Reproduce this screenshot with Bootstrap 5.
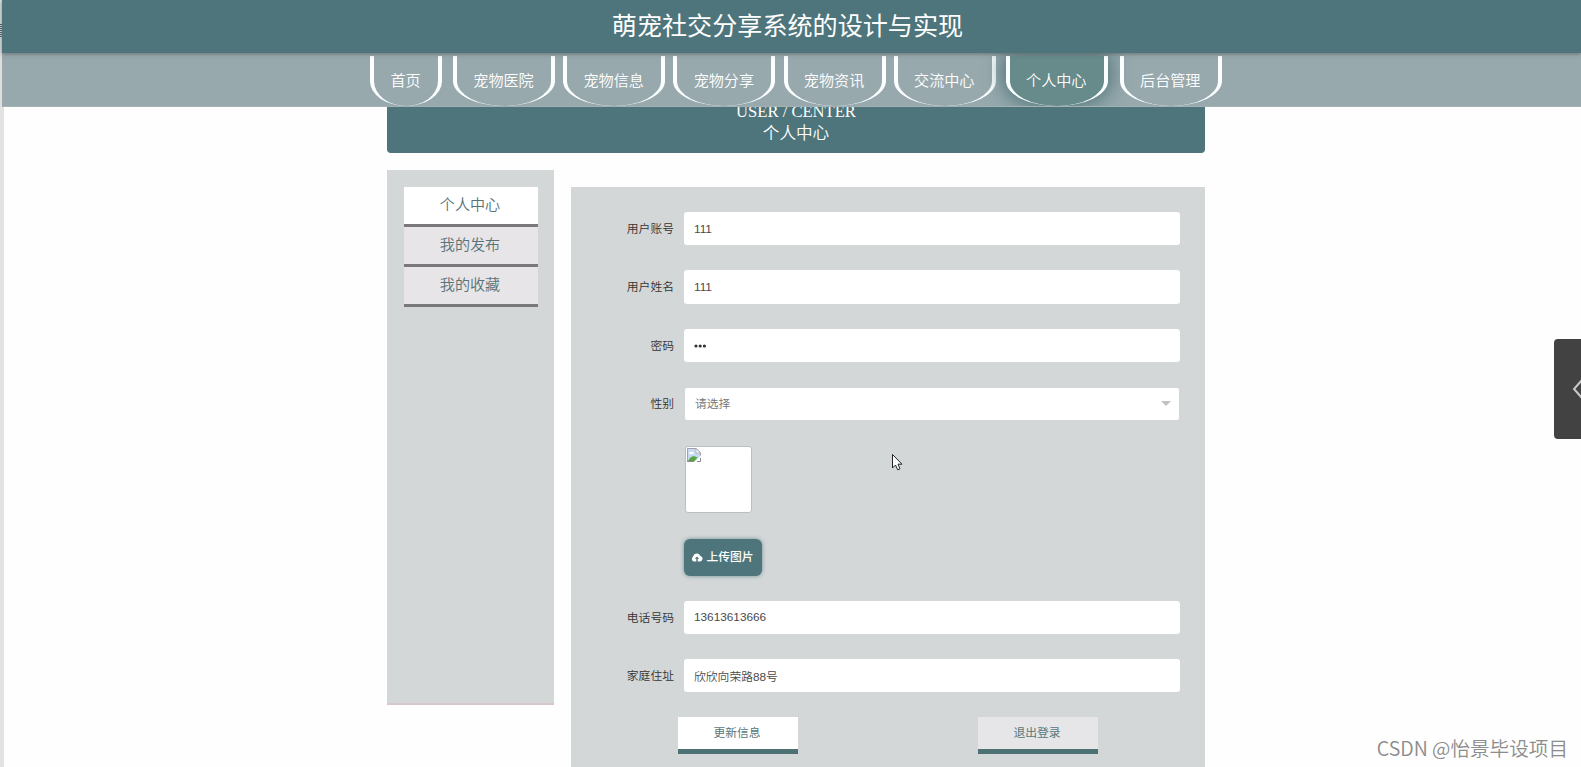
<!DOCTYPE html>
<html lang="zh-CN">
<head>
<meta charset="utf-8">
<title>萌宠社交分享系统的设计与实现</title>
<link rel="stylesheet" href="https://cdn.jsdelivr.net/npm/bootstrap@5.3.0/dist/css/bootstrap.min.css">
<style>
:root{--teal:#4e757b;--mist:#97a9ad;--panel:#d3d7d8}
body{font-family:"Liberation Sans","Noto Sans CJK SC",sans-serif;font-weight:350;height:767px;overflow:hidden;background:#fefefe;color:#333}
.edge-strip{width:4px;background:#e2e2e2;flex:none}
.edge-strip .edge-top{height:107px;width:2px;position:relative;background:#dedede}
.edge-marks{position:absolute;left:0;top:24px;width:2px;height:13px;background:repeating-linear-gradient(#556 0 1px,#ddd 1px 2px)}
.page-main{margin-left:-2px;min-width:0}
.site-head{height:53px;background:var(--teal);padding-right:8px;position:relative;z-index:1;box-shadow:0 1px 4px rgba(90,90,90,.7)}
.site-head h1{font-size:25.1px;line-height:53px;height:53px;color:#fff;font-weight:400}
.tab-bar{height:54px;background:var(--mist);padding:3px 0 0 368px;overflow:hidden;border-bottom:1px solid #a4b1b3}
.pet-tab{width:102px;height:50px;border:solid #fbffff;border-width:0 4px;border-radius:0 0 50% 50%;color:#fff;font-size:15.1px;line-height:49px;text-align:center;text-decoration:none;flex:none;white-space:nowrap;padding-right:1px}
.pet-tab.home{width:72px;margin-right:11px}
.pet-tab.gap-s{margin-right:8.2px}
.pet-tab.gap-m{margin-right:10px}
.pet-tab.gap-l{margin-right:12px}
.pet-tab.on{background:#678a8b;box-shadow:0 0 20px 3px #4e757b}
.content-wrap{width:818px;margin-left:385px}
.banner-box{height:46px;background:var(--teal);border-radius:0 0 4px 4px;color:#fff;overflow:hidden;padding-bottom:8px;font-size:16.6px;line-height:22px}
.banner-box .en{font-family:"Liberation Serif",serif;line-height:23px}
.side-box{width:167px;height:535px;margin-top:17px;padding:16.5px 16.5px 0;background:var(--panel);border-bottom:2px solid #d6c8ca;flex:none}
.side-link{height:40px;border-bottom:3.5px solid #7b7879;background:#e7e5e7;color:#587479;font-size:15.1px;line-height:36px;text-align:center;text-decoration:none;padding-right:1px}
.side-link.on{background:#fff}
.form-box{margin:34px 0 0 17px;width:634px;height:600px;padding:25px 25px 0 0;background:var(--panel)}
.field-row{height:33.4px;margin-bottom:25px;font-size:11.8px}
.field-row label{width:103px;text-align:right;margin-right:10px;flex:none;line-height:34px}
.form-box .form-control{height:33.4px;border:0;border-radius:3px;font-size:11.8px;font-weight:350;padding:0 10px;color:#4a4a4a;line-height:32px}
.sel-box{height:32px;background:#fff;border-radius:2px;color:#757575;padding:0 8px 0 10px;margin:0 1px;line-height:32px}
.sel-box i{border:5px solid transparent;border-top-color:#c2c2c2;border-bottom:0}
.thumb-box{width:67px;height:67px;background:#fff;border:1px solid #babfc0;border-radius:3px;margin:1px 0 26px 114px}
.thumb-box svg{display:block;margin:1px}
.up-btn{display:flex;width:78px;height:37px;margin:0 0 25px 113px;background:var(--teal);color:#fff;border:0;border-radius:6px;font-size:11.8px;font-weight:500;padding:1px 1px 0 0;box-shadow:0 0 4px rgba(78,117,123,.7)}
.up-btn svg{margin-right:3px}
.act-row{padding-left:107px;gap:180px}
.act-btn{width:120px;height:37px;border:0;border-bottom:5px solid #4e7274;border-radius:0;background:#fff;color:#58777b;font-size:11.8px;line-height:32px;padding:0 2px 0 0}
.act-btn.alt{background:#e6e6e9}
.drawer-tab{position:absolute;right:0;top:339px;width:27px;height:100px;background:#424242;border-radius:4px 0 0 4px;overflow:hidden}
.mouse-ptr{position:absolute;left:891px;top:453px}
.csdn-mark{position:absolute;right:13px;top:734px;font-size:19.6px;line-height:28px;color:#8c8c8c;white-space:nowrap;font-family:"Noto Sans CJK SC",sans-serif;font-weight:350}
</style>
</head>
<body>
<div class="d-flex h-100">
  <div class="edge-strip"><div class="edge-top"><span class="edge-marks"></span></div></div>
  <div class="page-main flex-grow-1">
    <header class="site-head text-center"><h1 class="m-0">萌宠社交分享系统的设计与实现</h1></header>
    <nav class="tab-bar d-flex">
      <a class="pet-tab home">首页</a>
      <a class="pet-tab gap-s">宠物医院</a>
      <a class="pet-tab gap-s">宠物信息</a>
      <a class="pet-tab gap-s">宠物分享</a>
      <a class="pet-tab gap-s">宠物资讯</a>
      <a class="pet-tab gap-m">交流中心</a>
      <a class="pet-tab gap-l on">个人中心</a>
      <a class="pet-tab">后台管理</a>
    </nav>
    <div class="content-wrap">
      <div class="banner-box d-flex flex-column justify-content-end text-center">
        <div class="en">USER / CENTER</div>
        <div>个人中心</div>
      </div>
      <div class="d-flex align-items-start">
        <aside class="side-box d-flex flex-column">
          <a class="side-link on">个人中心</a>
          <a class="side-link">我的发布</a>
          <a class="side-link">我的收藏</a>
        </aside>
        <form class="form-box">
          <div class="field-row d-flex"><label>用户账号</label><input class="form-control" value="111"></div>
          <div class="field-row d-flex"><label>用户姓名</label><input class="form-control" value="111"></div>
          <div class="field-row d-flex"><label>密码</label><div class="form-control"><svg width="13" height="6" fill="#333"><circle cx="2" cy="3" r="1.6"/><circle cx="6.2" cy="3" r="1.6"/><circle cx="10.4" cy="3" r="1.6"/></svg></div></div>
          <div class="field-row d-flex align-items-center"><label>性别</label><div class="sel-box flex-grow-1 d-flex align-items-center justify-content-between"><span>请选择</span><i></i></div></div>
          <div class="thumb-box">
            <svg width="14" height="14" viewBox="0 0 14 14"><path d="M.5 13.500V.5H9l4.500 4.500v3L8 13.500z" fill="#c7d9f2"/><path d="M.5 13.500V.5H9l4.500 4v3" fill="none" stroke="#a0a0a8"/><path d="M9 .5V5h4.500z" fill="#fff" stroke="#aaa" stroke-width=".8"/><ellipse cx="4.500" cy="5" rx="2.500" ry="1.300" fill="#fff"/><path d="M1 13.500c1-3 4-6 7-5l2.500 1L7 13.500z" fill="#58a53c"/><path d="M0 13.500h7M10 13.500h3.500V10" fill="none" stroke="#888"/></svg>
          </div>
          <button type="button" class="up-btn align-items-center justify-content-center">
            <svg width="12" height="9" viewBox="0 0 13 10"><path d="M3 9.500A3 3 0 0 1 2.200 4 4.200 4.200 0 0 1 10.200 3.300 3.150 3.150 0 0 1 10 9.500z" fill="#fff"/><path d="M6.500 3.800 9 6.500H7.300V10H5.700V6.500H4z" fill="#4e757b"/></svg>上传图片</button>
          <div class="field-row d-flex"><label>电话号码</label><input class="form-control" value="13613613666"></div>
          <div class="field-row d-flex"><label>家庭住址</label><input class="form-control" value="欣欣向荣路88号"></div>
          <div class="act-row d-flex">
            <button type="button" class="act-btn">更新信息</button>
            <button type="button" class="act-btn alt">退出登录</button>
          </div>
        </form>
      </div>
    </div>
  </div>
</div>
<div class="drawer-tab"><svg width="27" height="100"><path d="M28 41l-8 9 8 9" fill="none" stroke="#c8c8c8" stroke-width="2"/></svg></div>
<svg class="mouse-ptr" width="12" height="19" viewBox="0 0 12 19"><path d="M1.500 1.500v13.500l3-3 2.200 4.800 2.300-1L7 11.200h4z" fill="#fff" stroke="#222" stroke-width="1"/></svg>
<div class="csdn-mark">CSDN @怡景毕设项目</div>
<script src="https://cdn.jsdelivr.net/npm/bootstrap@5.3.0/dist/js/bootstrap.bundle.min.js"></script>
</body>
</html>
